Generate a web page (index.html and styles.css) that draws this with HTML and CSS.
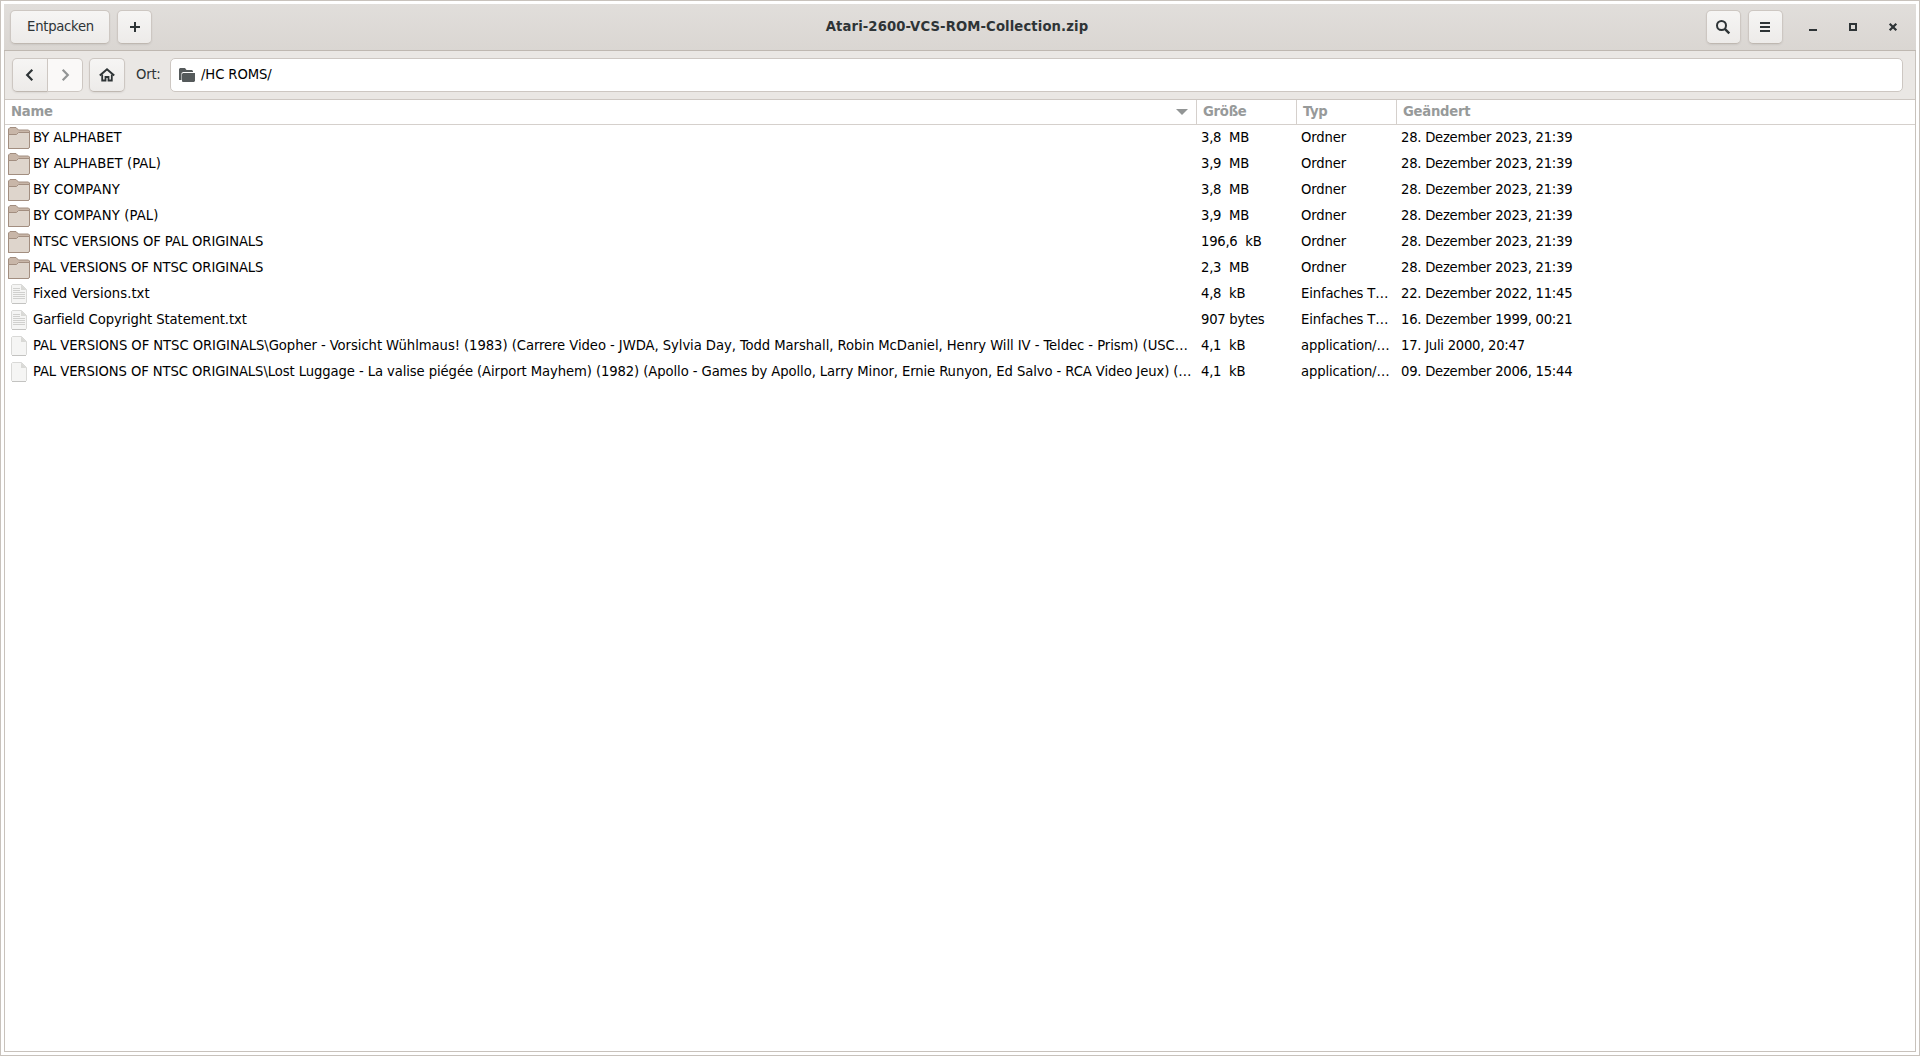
FILE: index.html
```html
<!DOCTYPE html>
<html lang="de">
<head>
    <meta charset="UTF-8">
    <meta content="width=device-width, initial-scale=1.0" name="viewport">
    <title>Atari-2600-VCS-ROM-Collection.zip</title>
    <link rel="stylesheet" href="styles.css">
</head>
<body>
<!-- shared icons -->
<svg class="sprite" width="0" height="0">
    <symbol id="folder" viewBox="0 0 22 22">
        <path d="M.5 20.5V2L2 .5h6L10.500 3H20.500L21.500 4V20L20.500 21.500H.5z" fill="#c8b6a8" stroke="#a28e80"/>
        <path d="M.5 7.500H8.500L10.500 5.500H21.500V20L20.500 21.500H.5z" fill="#ded5cc" stroke="#a28e80"/>
    </symbol>
    <symbol id="file" viewBox="0 0 16 20">
        <path d="M.5 1.500L1.500.5H10.500L15.500 5.500V18.500L14.500 19.500H1.500L.5 18.500z" fill="#f5f5f4" stroke="#d9d9d7"/>
        <path d="M1 19.500H15" stroke="#c3c3c1"/>
        <path d="M10 .5V6H15.500z" fill="#d9d9d6"/>
    </symbol>
    <symbol id="text" viewBox="0 0 16 20">
        <use href="#file"/>
        <path d="M2 4.500H9M2 6.500H9M2 8.500H14M2 10.500H14M2 12.500H14M2 14.500H14" stroke="#d0d0ce"/>
    </symbol>
</svg>

<div class="window">
    <div class="headerbar">
        <div class="group">
            <button class="btn extract">Entpacken</button>
            <button class="btn icon-btn">
                <svg width="16" height="16"><path d="M7 3h2v4h4v2H9v4H7V9H3V7h4z" fill="#2e3436"/></svg>
            </button>
        </div>
        <div class="title">Atari-2600-VCS-ROM-Collection.zip</div>
        <div class="group right">
            <button class="btn icon-btn">
                <svg width="16" height="16"><circle cx="6.500" cy="6.500" r="4.500" fill="none" stroke="#2e3436" stroke-width="2"/><path d="M9.800 9.800L14.300 14.300" stroke="#2e3436" stroke-width="2.400"/></svg>
            </button>
            <button class="btn icon-btn">
                <svg width="16" height="16"><path d="M3 3h10v2H3zM3 7h10v2H3zM3 11h10v2H3z" fill="#2e3436"/></svg>
            </button>
            <div class="controls">
                <svg width="16" height="16"><path d="M4 10h8v2H4z" fill="#2e3436"/></svg>
                <svg width="16" height="16"><path d="M5 5h6v6H5z" fill="none" stroke="#2e3436" stroke-width="2"/></svg>
                <svg width="16" height="16"><path d="M4.700 4.700L11.300 11.300M11.300 4.700L4.700 11.300" stroke="#2e3436" stroke-width="2.200"/></svg>
            </div>
        </div>
    </div>

    <div class="content">
        <div class="toolbar">
            <div class="nav">
                <button class="btn back">
                    <svg width="16" height="16"><path d="M10.300 2.800L5.200 8L10.300 13.200" fill="none" stroke="#2e3436" stroke-width="2.200"/></svg>
                </button>
                <button class="btn forward">
                    <svg width="16" height="16"><path d="M5.700 2.800L10.800 8L5.700 13.200" fill="none" stroke="#929595" stroke-width="2.200"/></svg>
                </button>
            </div>
            <button class="btn home">
                <svg width="16" height="16"><path d="M.8 8.500L8 2.300L15.200 8.500" fill="none" stroke="#2e3436" stroke-width="2"/><path d="M3.200 7.500v6h3.300V10h3v3.500h3.300v-6" fill="none" stroke="#2e3436" stroke-width="1.800"/></svg>
            </button>
            <span class="label">Ort:</span>
            <div class="entry">
                <svg width="16" height="14"><path d="M0 12V1L1 0H6L7.500 2H13L14 3V4H4L2.500 5V12z" fill="#555a5b"/><path d="M3 13V6L4 5H16V13L15 14H3.500z" fill="#555a5b"/></svg>
                <span class="path">/HC ROMS/</span>
            </div>
        </div>

        <div class="list">
            <div class="row head">
                <div class="name"><span>Name</span><svg width="12" height="6"><path d="M0 0h12L6 6z" fill="#929595"/></svg></div>
                <div class="size">Größe</div>
                <div class="type">Typ</div>
                <div class="date">Geändert</div>
            </div>
            <div class="row">
                <div class="name"><svg class="ico"><use href="#folder"/></svg><span>BY ALPHABET</span></div>
                <div class="size">3,8  MB</div>
                <div class="type">Ordner</div>
                <div class="date">28. Dezember 2023, 21:39</div>
            </div>
            <div class="row">
                <div class="name loose"><svg class="ico"><use href="#folder"/></svg><span>BY ALPHABET (PAL)</span></div>
                <div class="size">3,9  MB</div>
                <div class="type">Ordner</div>
                <div class="date">28. Dezember 2023, 21:39</div>
            </div>
            <div class="row">
                <div class="name wide"><svg class="ico"><use href="#folder"/></svg><span>BY COMPANY</span></div>
                <div class="size">3,8  MB</div>
                <div class="type">Ordner</div>
                <div class="date">28. Dezember 2023, 21:39</div>
            </div>
            <div class="row">
                <div class="name wide"><svg class="ico"><use href="#folder"/></svg><span>BY COMPANY (PAL)</span></div>
                <div class="size">3,9  MB</div>
                <div class="type">Ordner</div>
                <div class="date">28. Dezember 2023, 21:39</div>
            </div>
            <div class="row">
                <div class="name tight"><svg class="ico"><use href="#folder"/></svg><span>NTSC VERSIONS OF PAL ORIGINALS</span></div>
                <div class="size">196,6  kB</div>
                <div class="type">Ordner</div>
                <div class="date">28. Dezember 2023, 21:39</div>
            </div>
            <div class="row">
                <div class="name tight"><svg class="ico"><use href="#folder"/></svg><span>PAL VERSIONS OF NTSC ORIGINALS</span></div>
                <div class="size">2,3  MB</div>
                <div class="type">Ordner</div>
                <div class="date">28. Dezember 2023, 21:39</div>
            </div>
            <div class="row">
                <div class="name loose"><svg class="ico doc"><use href="#text"/></svg><span>Fixed Versions.txt</span></div>
                <div class="size">4,8  kB</div>
                <div class="type">Einfaches T…</div>
                <div class="date">22. Dezember 2022, 11:45</div>
            </div>
            <div class="row">
                <div class="name tight"><svg class="ico doc"><use href="#text"/></svg><span>Garfield Copyright Statement.txt</span></div>
                <div class="size">907 bytes</div>
                <div class="type">Einfaches T…</div>
                <div class="date">16. Dezember 1999, 00:21</div>
            </div>
            <div class="row">
                <div class="name"><svg class="ico doc"><use href="#file"/></svg><span>PAL VERSIONS OF NTSC ORIGINALS\Gopher - Vorsicht Wühlmaus! (1983) (Carrere Video - JWDA, Sylvia Day, Todd Marshall, Robin McDaniel, Henry Will IV - Teldec - Prism) (USC…</span></div>
                <div class="size">4,1  kB</div>
                <div class="type">application/…</div>
                <div class="date">17. Juli 2000, 20:47</div>
            </div>
            <div class="row">
                <div class="name tight"><svg class="ico doc"><use href="#file"/></svg><span>PAL VERSIONS OF NTSC ORIGINALS\Lost Luggage - La valise piégée (Airport Mayhem) (1982) (Apollo - Games by Apollo, Larry Minor, Ernie Runyon, Ed Salvo - RCA Video Jeux) (…</span></div>
                <div class="size">4,1  kB</div>
                <div class="type">application/…</div>
                <div class="date">09. Dezember 2006, 15:44</div>
            </div>
        </div>
    </div>
</div>
</body>
</html>
```
FILE: styles.css
```css
* {
    box-sizing: border-box;
}

body {
    margin: 0;
    height: 1056px;
    padding: 3px;
    border: 1px solid #c8c2bc;
    background: #fff;
    font-family: "DejaVu Sans Condensed", "DejaVu Sans", sans-serif;
    font-stretch: condensed;
    font-size: 14.67px;
    color: #000;
    overflow: hidden;
}

.sprite {
    position: absolute;
}

svg {
    display: block;
    flex-shrink: 0;
}

.window {
    height: 1048px;
    display: flex;
    flex-direction: column;
}

.headerbar {
    height: 47px;
    display: flex;
    justify-content: space-between;
    align-items: center;
    padding: 0 0 1px 6px;
    border-bottom: 1px solid #bfb8b1;
    background: linear-gradient(#e1dedb, #dad6d2);
    color: #2e3436;
}

.group {
    display: flex;
    align-items: center;
    gap: 7px;
    width: 210px;
}

.right {
    justify-content: flex-end;
}

.title {
    padding-bottom: 2px;
    margin-right: 12px;
    font-weight: bold;
    letter-spacing: 0.12px;
}

.btn {
    display: flex;
    align-items: center;
    justify-content: center;
    height: 34px;
    padding: 0;
    border: 1px solid #cdc7c2;
    border-bottom-color: #bfb8b1;
    border-radius: 5px;
    background: linear-gradient(#f6f5f4, #edebe9);
    box-shadow: 0 1px 2px rgba(0, 0, 0, 0.07);
    font: inherit;
    color: #2e3436;
}

.extract {
    width: 100px;
    padding: 0 0 2px 1px;
    letter-spacing: -0.25px;
}

.icon-btn {
    width: 35px;
}

.controls {
    display: flex;
    gap: 24px;
    padding: 0 15px 0 15px;
}

.content {
    flex: 1;
    border: 1px solid #c8c2bc;
    border-top: 0;
}

.toolbar {
    display: flex;
    align-items: center;
    height: 49px;
    padding: 0 12px 0 7px;
    border-bottom: 1px solid #cdc7c2;
    background: #eae7e4;
}

.nav {
    display: flex;
    margin-right: 6px;
}

.back {
    width: 36px;
    border-radius: 5px 0 0 5px;
}

.forward {
    width: 35px;
    border-left: 0;
    border-color: #cdc7c2;
    border-radius: 0 5px 5px 0;
    background: #faf9f8;
    box-shadow: none;
}

.home {
    width: 36px;
}

.label {
    width: 34px;
    margin-left: 11px;
    padding-bottom: 4px;
    letter-spacing: -0.2px;
    color: #2e3436;
}

.entry {
    flex: 1;
    display: flex;
    align-items: center;
    gap: 6px;
    height: 34px;
    padding-left: 8px;
    border: 1px solid #cdc7c2;
    border-radius: 5px;
    background: #fff;
}

.path {
    padding-bottom: 4px;
    letter-spacing: -0.1px;
}

.row {
    display: grid;
    grid-template-columns: 1192px 100px 100px 1fr;
    height: 26px;
    line-height: 24px;
    letter-spacing: -0.25px;
    white-space: pre;
}

.row > div {
    padding-left: 4px;
}

.row > .name {
    display: flex;
    align-items: center;
    gap: 3px;
    padding-left: 3px;
    letter-spacing: -0.06px;
    overflow: hidden;
}

.row > .tight {
    letter-spacing: -0.09px;
}

.row > .loose {
    letter-spacing: 0.05px;
}

.row > .wide {
    letter-spacing: 0.15px;
}

.row > .type {
    letter-spacing: -0.15px;
}

.name span {
    padding-bottom: 2px;
}

.ico {
    width: 22px;
    height: 22px;
}

.doc {
    width: 16px;
    height: 20px;
    margin: 0 3px;
}

.head {
    height: 25px;
    line-height: 22px;
    border-bottom: 1px solid #d5d0cc;
    font-weight: bold;
    color: #979a9a;
}

.row.head > div {
    padding-left: 6px;
    border-right: 1px solid #d5d0cc;
    letter-spacing: -0.25px;
}

.row.head > .name {
    justify-content: space-between;
    padding: 0 8px 0 6px;
}

.row.head > .date {
    border-right: 0;
}
```
